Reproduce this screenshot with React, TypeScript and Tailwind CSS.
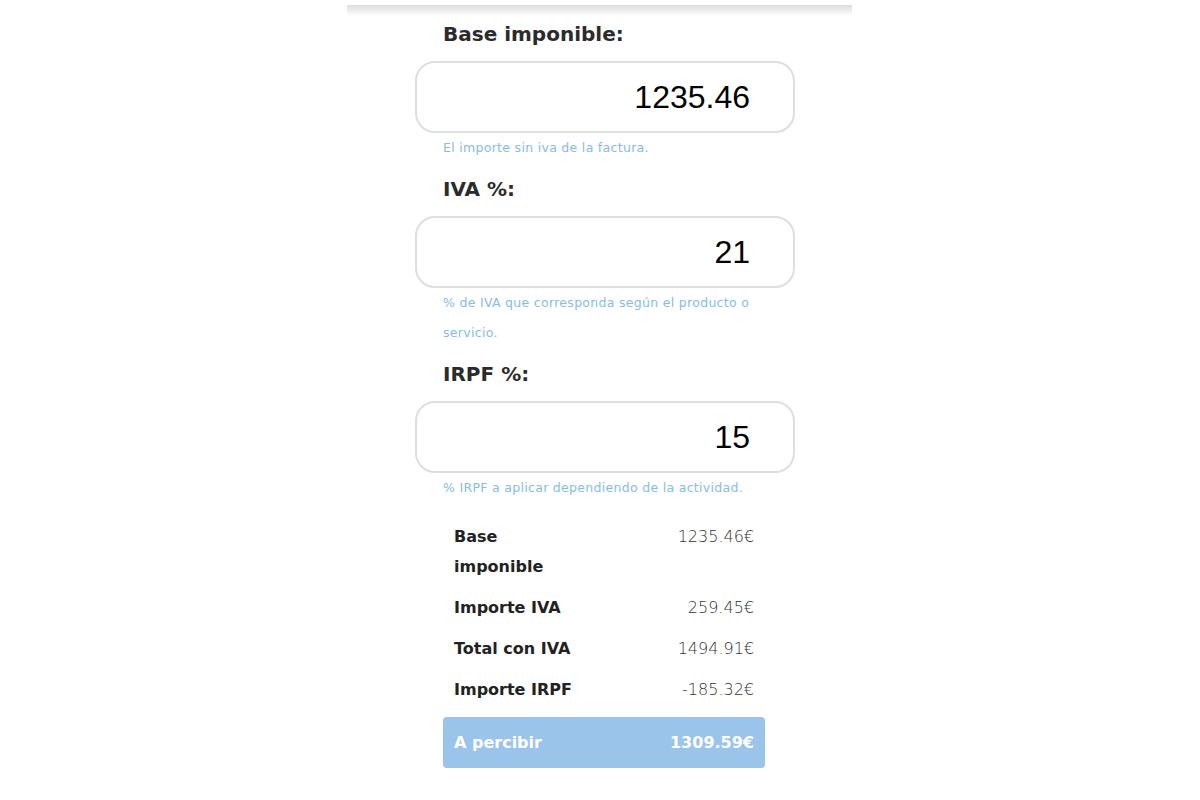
import React from "react";

const font = { fontFamily: "'DejaVu Sans', 'Open Sans', sans-serif" };

function Field({ label, value, help, first }: { label: string; value: string; help: string; first?: boolean }) {
  return (
    <div>
      <div className={`${first ? "mt-[3px]" : "mt-[11px]"} ml-[28px] text-[20px] leading-[30px] font-bold text-[#2b2b2b]`}>{label}</div>
      <div className="mt-[12px] w-[380px] h-[72px] rounded-[20px] border-2 border-[#dedede] flex items-center justify-end pr-[43px]">
        <span className="text-[32px] text-black" style={{ fontFamily: "'Liberation Sans', Arial, sans-serif" }}>
          {value}
        </span>
      </div>
      <div className="ml-[28px] w-[315px] text-[12.5px] tracking-[0.3px] leading-[30px] text-[#86bde3]">{help}</div>
    </div>
  );
}

export default function App() {
  const rows = [
    ["Base imponible", "1235.46€"],
    ["Importe IVA", "259.45€"],
    ["Total con IVA", "1494.91€"],
    ["Importe IRPF", "-185.32€"],
  ];
  return (
    <div className="min-h-[800px] bg-white flex justify-center" style={font}>
      <div className="w-[505px] ml-[-1px]">
        <div className="mt-[5px] h-[11px] bg-gradient-to-b from-[#dcdcdc] to-white" />
        <div className="pl-[68px]">
          <Field first label="Base imponible:" value="1235.46" help="El importe sin iva de la factura." />
          <Field label="IVA %:" value="21" help="% de IVA que corresponda según el producto o servicio." />
          <Field label="IRPF %:" value="15" help="% IRPF a aplicar dependiendo de la actividad." />
          <div className="ml-[28px] w-[322px] mt-[13px]">
            {rows.map(([k, v]) => (
              <div key={k} className="flex justify-between px-[11px] py-[5.5px] text-[16px] leading-[30px]">
                <span className="w-[130px] font-bold text-[#222]">{k}</span>
                <span className="font-extralight text-[16px] text-[#333]">{v}</span>
              </div>
            ))}
            <div className="mt-[7px] h-[51px] rounded-[4px] bg-[#9ac4ea] flex items-center justify-between px-[11px] text-white font-bold text-[16px]">
              <span>A percibir</span>
              <span>1309.59€</span>
            </div>
          </div>
        </div>
      </div>
    </div>
  );
}
